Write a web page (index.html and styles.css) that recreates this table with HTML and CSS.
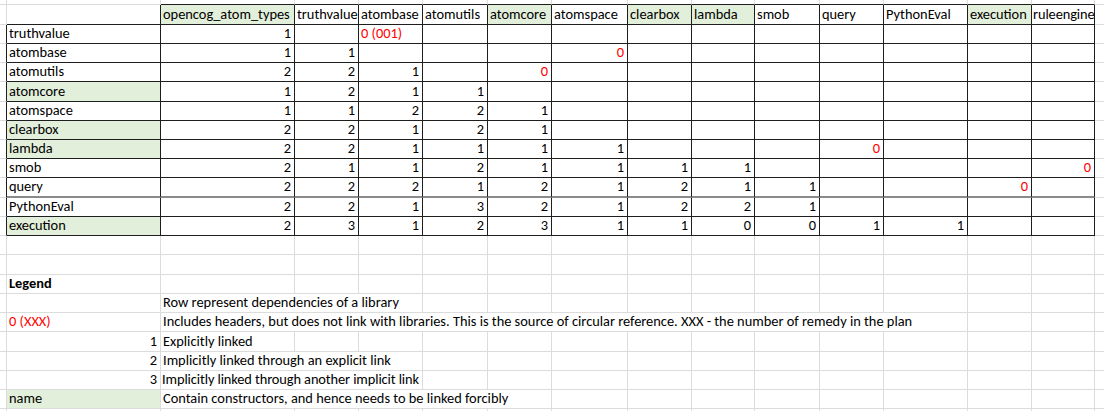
FILE: index.html
```html
<!DOCTYPE html>
<html>
<head>
<meta charset="utf-8">
<link rel="stylesheet" href="styles.css">
</head>
<body>
<table class="sheet">
  <colgroup>
    <col class="w0"><col class="wa"><col class="wb"><col class="wc"><col class="wd"><col class="we"><col class="wf"><col class="wg"><col class="wh"><col class="wi"><col class="wj"><col class="wk"><col class="wl"><col class="wm"><col class="wn"><col class="wo">
  </colgroup>
  <tr class="r5"><td></td><td></td><td class="kb"></td><td class="kb"></td><td class="kb"></td><td class="kb"></td><td class="kb"></td><td class="kb"></td><td class="kb"></td><td class="kb"></td><td class="kb"></td><td class="kb"></td><td class="kb"></td><td class="kb"></td><td class="kb"></td><td></td></tr>
  <tr class="r20"><td></td><td class="k"></td><td class="k g">opencog_atom_types</td><td class="k">truthvalue</td><td class="k">atombase</td><td class="k">atomutils</td><td class="k g">atomcore</td><td class="k">atomspace</td><td class="k g">clearbox</td><td class="k g">lambda</td><td class="k">smob</td><td class="k">query</td><td class="k">PythonEval</td><td class="k g">execution</td><td class="k tight">ruleengine</td><td></td></tr>
  <tr class="r19"><td class="kr"></td><td class="k">truthvalue</td><td class="k n">1</td><td class="k"></td><td class="k red">0 (001)</td><td class="k"></td><td class="k"></td><td class="k"></td><td class="k"></td><td class="k"></td><td class="k"></td><td class="k"></td><td class="k"></td><td class="k"></td><td class="k"></td><td></td></tr>
  <tr class="r19"><td class="kr"></td><td class="k">atombase</td><td class="k n">1</td><td class="k n">1</td><td class="k"></td><td class="k"></td><td class="k"></td><td class="k n red">0</td><td class="k"></td><td class="k"></td><td class="k"></td><td class="k"></td><td class="k"></td><td class="k"></td><td class="k"></td><td></td></tr>
  <tr class="r19"><td class="kr"></td><td class="k">atomutils</td><td class="k n">2</td><td class="k n">2</td><td class="k n">1</td><td class="k"></td><td class="k n red">0</td><td class="k"></td><td class="k"></td><td class="k"></td><td class="k"></td><td class="k"></td><td class="k"></td><td class="k"></td><td class="k"></td><td></td></tr>
  <tr class="r20"><td class="kr"></td><td class="k g">atomcore</td><td class="k n">1</td><td class="k n">2</td><td class="k n">1</td><td class="k n">1</td><td class="k"></td><td class="k"></td><td class="k"></td><td class="k"></td><td class="k"></td><td class="k"></td><td class="k"></td><td class="k"></td><td class="k"></td><td></td></tr>
  <tr class="r19"><td class="kr"></td><td class="k">atomspace</td><td class="k n">1</td><td class="k n">1</td><td class="k n">2</td><td class="k n">2</td><td class="k n">1</td><td class="k"></td><td class="k"></td><td class="k"></td><td class="k"></td><td class="k"></td><td class="k"></td><td class="k"></td><td class="k"></td><td></td></tr>
  <tr class="r19"><td class="kr"></td><td class="k g">clearbox</td><td class="k n">2</td><td class="k n">2</td><td class="k n">1</td><td class="k n">2</td><td class="k n">1</td><td class="k"></td><td class="k"></td><td class="k"></td><td class="k"></td><td class="k"></td><td class="k"></td><td class="k"></td><td class="k"></td><td></td></tr>
  <tr class="r19"><td class="kr"></td><td class="k g">lambda</td><td class="k n">2</td><td class="k n">2</td><td class="k n">1</td><td class="k n">1</td><td class="k n">1</td><td class="k n">1</td><td class="k"></td><td class="k"></td><td class="k"></td><td class="k n red">0</td><td class="k"></td><td class="k"></td><td class="k"></td><td></td></tr>
  <tr class="r19"><td class="kr"></td><td class="k">smob</td><td class="k n">2</td><td class="k n">1</td><td class="k n">1</td><td class="k n">2</td><td class="k n">1</td><td class="k n">1</td><td class="k n">1</td><td class="k n">1</td><td class="k"></td><td class="k"></td><td class="k"></td><td class="k"></td><td class="k n red">0</td><td></td></tr>
  <tr class="r20 q"><td class="kr"></td><td class="k">query</td><td class="k n">2</td><td class="k n">2</td><td class="k n">2</td><td class="k n">1</td><td class="k n">2</td><td class="k n">1</td><td class="k n">2</td><td class="k n">1</td><td class="k n">1</td><td class="k"></td><td class="k"></td><td class="k n red">0</td><td class="k"></td><td></td></tr>
  <tr class="r19"><td class="kr"></td><td class="k">PythonEval</td><td class="k n">2</td><td class="k n">2</td><td class="k n">1</td><td class="k n">3</td><td class="k n">2</td><td class="k n">1</td><td class="k n">2</td><td class="k n">2</td><td class="k n">1</td><td class="k"></td><td class="k"></td><td class="k"></td><td class="k"></td><td></td></tr>
  <tr class="r19"><td class="kr"></td><td class="k g">execution</td><td class="k n">2</td><td class="k n">3</td><td class="k n">1</td><td class="k n">2</td><td class="k n">3</td><td class="k n">1</td><td class="k n">1</td><td class="k n">0</td><td class="k n">0</td><td class="k n">1</td><td class="k n">1</td><td class="k"></td><td class="k"></td><td></td></tr>
  <tr class="r19"><td></td><td></td><td></td><td></td><td></td><td></td><td></td><td></td><td></td><td></td><td></td><td></td><td></td><td></td><td></td><td></td></tr>
  <tr class="r20"><td></td><td></td><td></td><td></td><td></td><td></td><td></td><td></td><td></td><td></td><td></td><td></td><td></td><td></td><td></td><td></td></tr>
  <tr class="r19"><td></td><td class="bold">Legend</td><td></td><td></td><td></td><td></td><td></td><td></td><td></td><td></td><td></td><td></td><td></td><td></td><td></td><td></td></tr>
  <tr class="r19"><td></td><td></td><td colspan="3">Row represent dependencies of a library</td><td></td><td></td><td></td><td></td><td></td><td></td><td></td><td></td><td></td><td></td><td></td></tr>
  <tr class="r19"><td></td><td class="red">0 (XXX)</td><td colspan="11">Includes headers, but does not link with libraries. This is the source of circular reference. XXX - the number of remedy in the plan</td><td></td><td></td><td></td></tr>
  <tr class="r20"><td></td><td class="n">1</td><td>Explicitly linked</td><td></td><td></td><td></td><td></td><td></td><td></td><td></td><td></td><td></td><td></td><td></td><td></td><td></td></tr>
  <tr class="r19"><td></td><td class="n">2</td><td colspan="3">Implicitly linked through an explicit link</td><td></td><td></td><td></td><td></td><td></td><td></td><td></td><td></td><td></td><td></td><td></td></tr>
  <tr class="r19"><td></td><td class="n">3</td><td colspan="3" class="tight">Implicitly linked through another implicit link</td><td></td><td></td><td></td><td></td><td></td><td></td><td></td><td></td><td></td><td></td><td></td></tr>
  <tr class="r19"><td></td><td class="g">name</td><td colspan="5">Contain constructors, and hence needs to be linked forcibly</td><td></td><td></td><td></td><td></td><td></td><td></td><td></td><td></td><td></td></tr>
  <tr class="r19"><td></td><td></td><td></td><td></td><td></td><td></td><td></td><td></td><td></td><td></td><td></td><td></td><td></td><td></td><td></td><td></td></tr>
</table>
</body>
</html>
```
FILE: styles.css
```css
html, body {
  margin: 0;
  padding: 0;
  background: #ffffff;
  overflow: hidden;
}

.sheet {
  border-collapse: separate;
  border-spacing: 0;
  table-layout: fixed;
  width: 1135px;
  font-family: Carlito, Lato, "Liberation Sans", sans-serif;
  font-size: 14.4px;
  color: #000000;
}

.w0 { width: 7px; }
.wa { width: 154px; }
.wb { width: 134px; }
.wc { width: 64px; }
.wd { width: 64px; }
.we { width: 65px; }
.wf { width: 64px; }
.wg { width: 76px; }
.wh { width: 64px; }
.wi { width: 63px; }
.wj { width: 65px; }
.wk { width: 64px; }
.wl { width: 84px; }
.wm { width: 64px; }
.wn { width: 63px; }
.wo { width: 40px; }

.sheet td {
  box-sizing: border-box;
  padding: 0 2px 1px 2px;
  border-right: 1px solid #dcdcdc;
  border-bottom: 1px solid #dcdcdc;
  line-height: 17px;
  vertical-align: bottom;
  white-space: nowrap;
  overflow: hidden;
  text-align: left;
}

.r5 { height: 5px; }
.r5 td { padding: 0; line-height: 0; }
.r19 { height: 19px; }
.r20 { height: 20px; }

.sheet td.k {
  border-right-color: #1e1e1e;
  border-bottom-color: #1e1e1e;
}
.sheet td.kr { border-right-color: #1e1e1e; }
.sheet td.kb { border-bottom-color: #1e1e1e; }

.sheet .q td.k {
  border-bottom: 2px solid #8a8a8a;
}

.sheet td.n {
  text-align: right;
  padding-right: 3px;
}

.sheet td.tight {
  padding-left: 1px;
  padding-right: 0;
  letter-spacing: -0.1px;
  overflow: visible;
}

.sheet td.g { background: #e2efda; }
.sheet td.red { color: #ff0000; }
.sheet td.bold { font-weight: bold; }
```
